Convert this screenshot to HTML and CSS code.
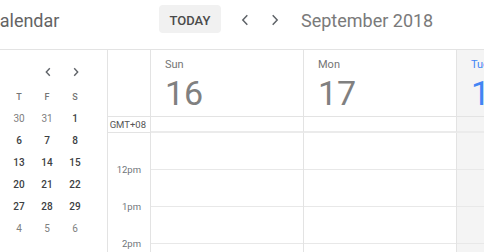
FILE: index.html
```html
<!DOCTYPE html>
<html lang="en">
<head>
<meta charset="utf-8">
<title>Calendar - Week of September 16, 2018</title>
<link rel="stylesheet" href="styles.css">
</head>
<body>
<div class="app">
  <header class="topbar">
    <div class="brand"><span class="brand-name">Calendar</span></div>
    <button class="today">TODAY</button>
    <button class="nav-btn" aria-label="Previous week">
      <svg width="8" height="12" viewBox="0 0 8 12"><path d="M6.3 1.2 L1.8 6 L6.3 10.8" fill="none" stroke="#5f6368" stroke-width="1.5"/></svg>
    </button>
    <button class="nav-btn" aria-label="Next week">
      <svg width="8" height="12" viewBox="0 0 8 12"><path d="M1.7 1.2 L6.2 6 L1.7 10.8" fill="none" stroke="#5f6368" stroke-width="1.5"/></svg>
    </button>
    <div class="period">September 2018</div>
  </header>

  <div class="body">
    <aside class="sidebar">
      <div class="mini-nav">
        <button class="mini-btn" aria-label="Previous month">
          <svg width="8" height="12" viewBox="0 0 8 12"><path d="M5.8 2.2 L2.3 6 L5.8 9.8" fill="none" stroke="#5f6368" stroke-width="1.4"/></svg>
        </button>
        <button class="mini-btn" aria-label="Next month">
          <svg width="8" height="12" viewBox="0 0 8 12"><path d="M2.2 2.2 L5.7 6 L2.2 9.8" fill="none" stroke="#5f6368" stroke-width="1.4"/></svg>
        </button>
      </div>
      <div class="mini-grid">
        <span class="wd">T</span><span class="wd">F</span><span class="wd">S</span>
        <span class="d out">30</span><span class="d out">31</span><span class="d">1</span>
        <span class="d">6</span><span class="d">7</span><span class="d">8</span>
        <span class="d">13</span><span class="d">14</span><span class="d">15</span>
        <span class="d">20</span><span class="d">21</span><span class="d">22</span>
        <span class="d">27</span><span class="d">28</span><span class="d">29</span>
        <span class="d out">4</span><span class="d out">5</span><span class="d out">6</span>
      </div>
    </aside>

    <main class="main">
      <div class="head-row">
        <div class="gutter-head"></div>
        <div class="day-head"><div class="dow">Sun</div><div class="dnum">16</div></div>
        <div class="day-head"><div class="dow">Mon</div><div class="dnum">17</div></div>
        <div class="day-head today-col"><div class="dow">Tue</div><div class="dnum">18</div></div>
      </div>
      <div class="allday-row">
        <div class="tz">GMT+08</div>
        <div class="allday-cell"></div>
        <div class="allday-cell"></div>
        <div class="allday-cell today-col"></div>
      </div>
      <div class="grid">
        <div class="gutter">
          <div class="hour">12pm</div>
          <div class="hour">1pm</div>
          <div class="hour">2pm</div>
        </div>
        <div class="col"><div class="slot"></div><div class="slot"></div><div class="slot"></div><div class="slot"></div></div>
        <div class="col"><div class="slot"></div><div class="slot"></div><div class="slot"></div><div class="slot"></div></div>
        <div class="col today-col"><div class="slot"></div><div class="slot"></div><div class="slot"></div><div class="slot"></div></div>
      </div>
    </main>
  </div>
</div>
</body>
</html>
```

FILE: styles.css
```css
* { box-sizing: border-box; }

html, body {
  margin: 0;
  padding: 0;
}

body {
  width: 484px;
  height: 252px;
  overflow: hidden;
  background: #ffffff;
  font-family: Roboto, "Liberation Sans", Arial, sans-serif;
  color: #3c4043;
}

button {
  border: none;
  background: none;
  padding: 0;
  margin: 0;
  font: inherit;
  color: inherit;
  cursor: pointer;
}

.app {
  width: 484px;
}

/* ---------- top bar ---------- */
.topbar {
  display: flex;
  align-items: flex-start;
  height: 50px;
  border-bottom: 1px solid #e3e3e3;
}

.brand {
  flex: 0 0 171px;
  margin-left: -12px;
  margin-top: 9px;
  font-size: 18px;
  line-height: 24px;
  color: #646464;
  white-space: nowrap;
}

.today {
  flex: 0 0 62px;
  height: 28px;
  margin-top: 5px;
  padding-top: 3px;
  background: #f1f1f1;
  border-radius: 4px;
  font-size: 13px;
  font-weight: 500;
  line-height: 25px;
  color: #4a4a4a;
  text-align: center;
}

.nav-btn {
  flex: 0 0 24px;
  height: 28px;
  margin-top: 6px;
  display: flex;
  align-items: center;
  justify-content: center;
}

.today + .nav-btn { margin-left: 12px; }
.nav-btn + .nav-btn { margin-left: 6px; }

.period {
  margin-left: 14px;
  margin-top: 9px;
  font-size: 18px;
  line-height: 24px;
  color: #7a7a7a;
  white-space: nowrap;
}

/* ---------- body ---------- */
.body {
  display: flex;
  align-items: flex-start;
}

.sidebar {
  flex: 0 0 108px;
  height: 202px;
  border-right: 1px solid #e3e3e3;
  padding-top: 10px;
}

.mini-nav {
  display: flex;
  justify-content: flex-end;
  padding-right: 17px;
  height: 24px;
  margin-bottom: 2px;
}

.mini-btn {
  width: 28px;
  height: 24px;
  display: flex;
  align-items: center;
  justify-content: center;
}

.mini-grid {
  display: grid;
  grid-template-columns: repeat(3, 28px);
  grid-auto-rows: 22px;
  justify-content: end;
  padding-right: 18px;
  text-align: center;
  line-height: 22px;
}

.wd {
  font-size: 9px;
  font-weight: 500;
  color: #757575;
}

.d {
  font-size: 10px;
  font-weight: 500;
  color: #3c4043;
}

.d.out {
  font-weight: 400;
  color: #808080;
}

/* ---------- main grid ---------- */
.main {
  flex: 1 0 auto;
  display: flex;
  flex-direction: column;
}

.head-row,
.allday-row,
.grid {
  display: flex;
}

.gutter-head,
.tz,
.gutter {
  flex: 0 0 43px;
  border-right: 1px solid #e3e3e3;
}

.gutter-head {
  height: 67px;
  border-bottom: 1px solid #e3e3e3;
}

.day-head {
  flex: 0 0 153px;
  height: 67px;
  border-right: 1px solid #e3e3e3;
  border-bottom: 1px solid #e3e3e3;
  padding-left: 14px;
  padding-top: 8px;
}

.dow {
  font-size: 11px;
  line-height: 14px;
  color: #757575;
}

.dnum {
  margin-top: 4px;
  font-size: 34px;
  line-height: 34px;
  color: #808080;
}

.today-col {
  background: #f4f4f4;
}

.day-head.today-col .dow,
.day-head.today-col .dnum {
  color: #4285f4;
}

.allday-row {
  height: 16px;
}

.tz {
  height: 16px;
  border-bottom: 1px solid #e3e3e3;
  font-size: 9.5px;
  line-height: 15px;
  color: #555555;
  text-align: right;
  padding-right: 4px;
  white-space: nowrap;
}

.allday-cell {
  flex: 0 0 153px;
  height: 16px;
  border-right: 1px solid #e3e3e3;
  border-bottom: 2px solid #ebebeb;
}

.gutter {
  padding-top: 18px;
  height: 130px;
}

.hour {
  height: 37px;
  line-height: 37px;
  font-size: 9.5px;
  color: #70757a;
  text-align: right;
  padding-right: 9px;
}

.col {
  flex: 0 0 153px;
  border-right: 1px solid #e3e3e3;
}

.slot {
  height: 37px;
  border-bottom: 1px solid #e8e8e8;
}
```
